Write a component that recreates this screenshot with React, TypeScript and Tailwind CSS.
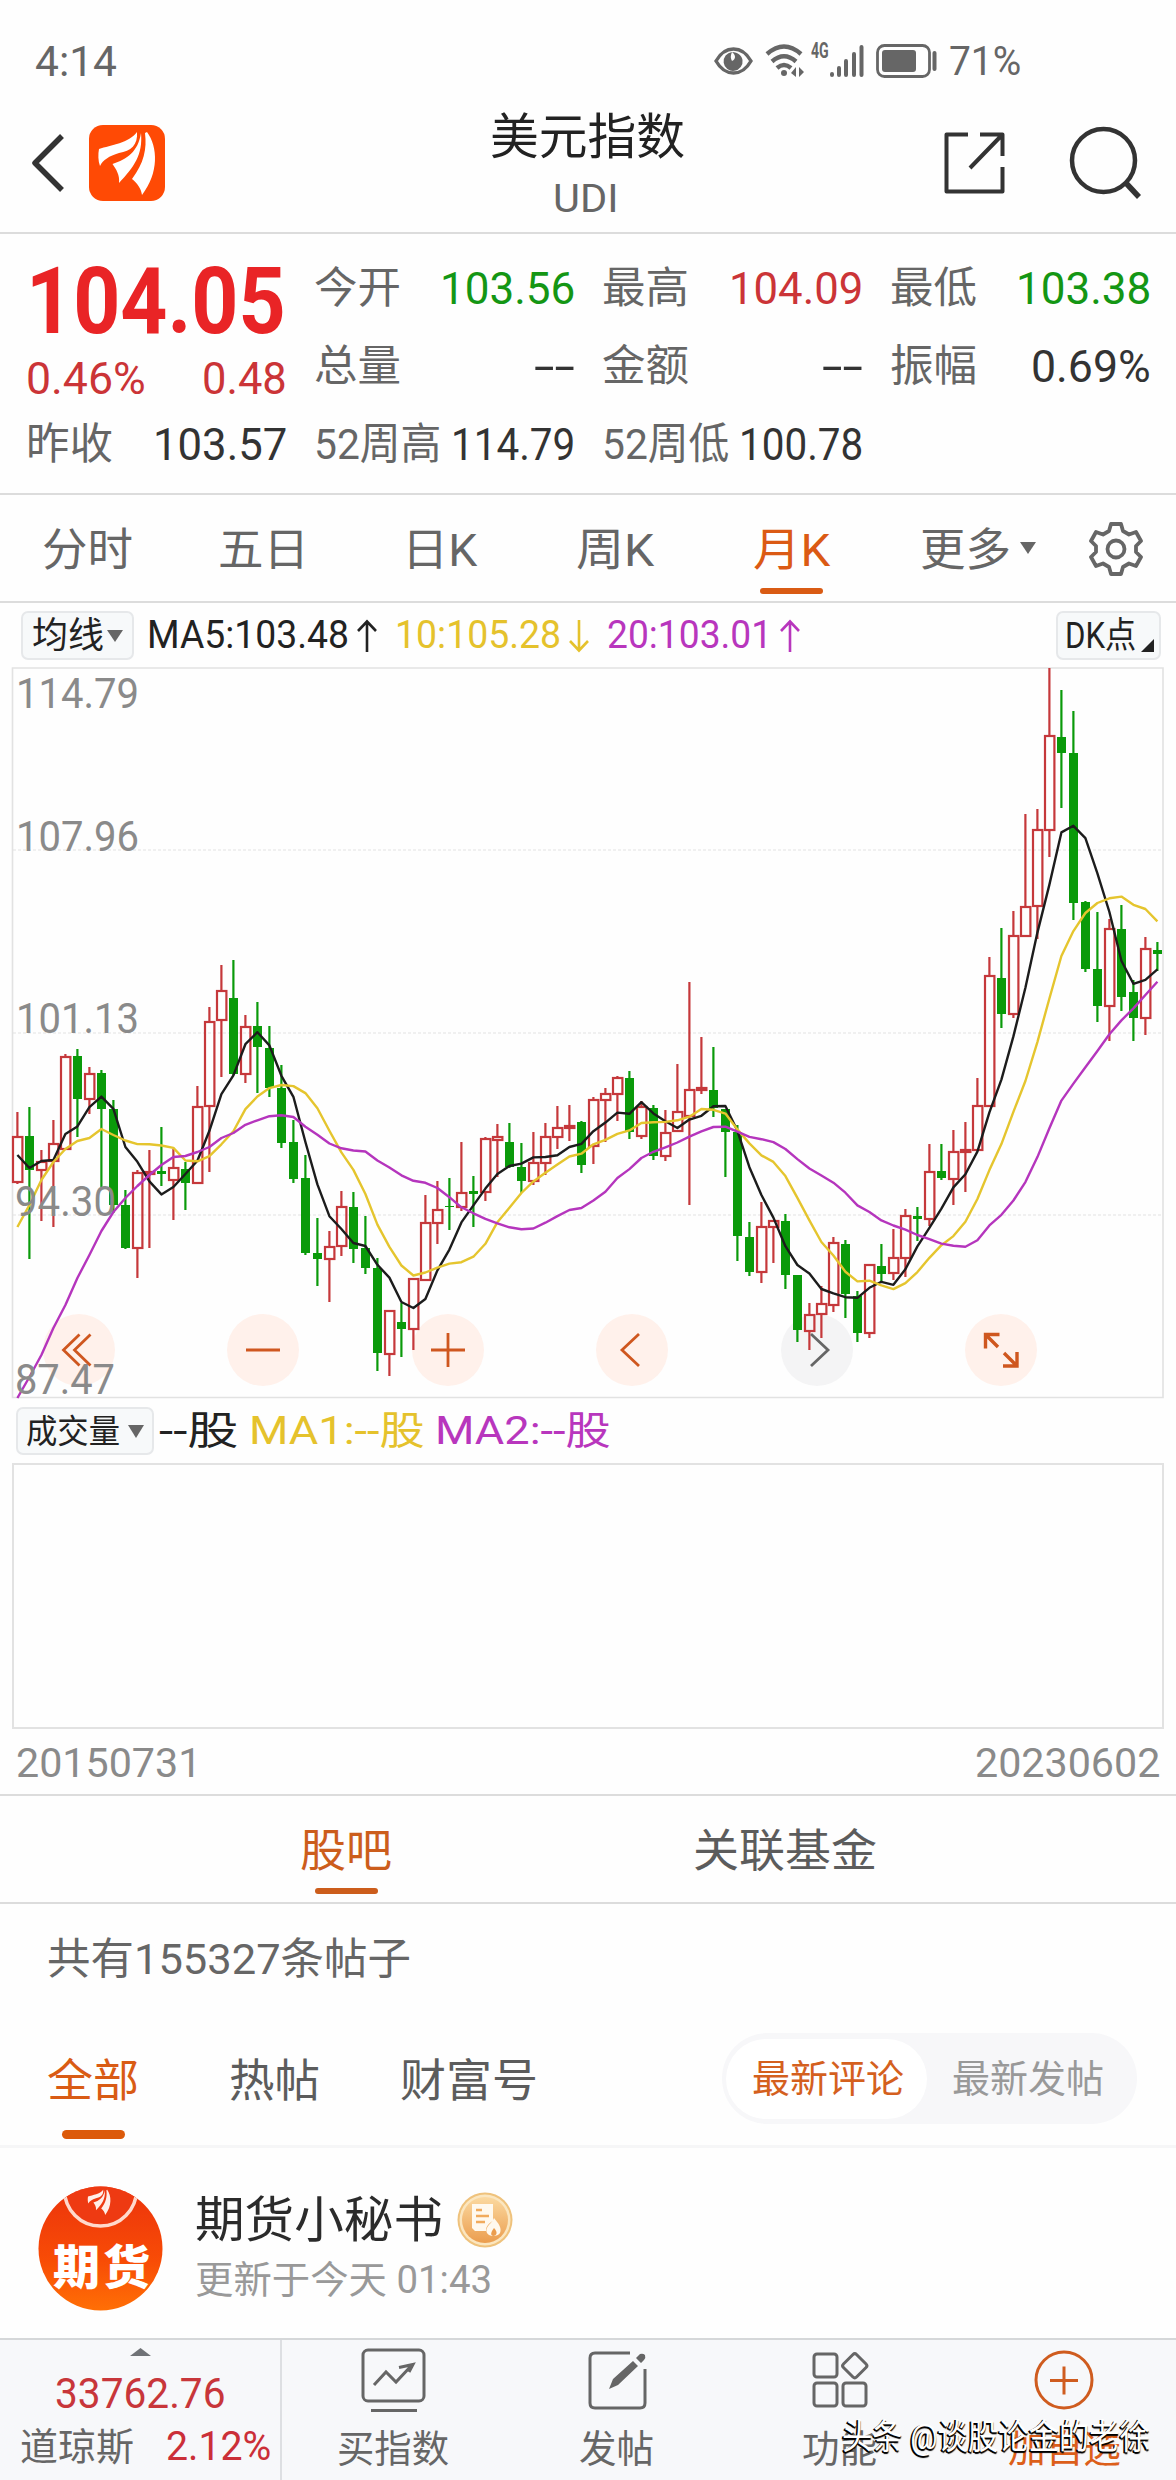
import { useLayoutEffect, useRef, useState, type ReactNode } from "react";

/* Text squeezed or stretched horizontally to an exact column width. */
function Fit({ w, className = "", children }: { w: number; className?: string; children: ReactNode }) {
  const ref = useRef<HTMLSpanElement>(null);
  const [scale, setScale] = useState(1);
  useLayoutEffect(() => {
    if (ref.current) setScale(w / ref.current.offsetWidth);
  }, [w]);
  return (
    <span className={`block shrink-0 whitespace-nowrap leading-none ${className}`} style={{ width: w }}>
      <span ref={ref} className="inline-block origin-left" style={{ transform: `scaleX(${scale})` }}>
        {children}
      </span>
    </span>
  );
}

const RED = "#c5383b";
const GREEN = "#0a9a0a";

/* [direction, high, body top, body bottom, low] in chart pixels; r = rising, g = falling */
type Candle = ["r" | "g", number, number, number, number];
const CANDLES: Candle[] = [
  ["r", 1112, 1137, 1182, 1184], ["g", 1107, 1136, 1170, 1259], ["r", 1150, 1162, 1170, 1221], ["r", 1120, 1144, 1161, 1227],
  ["r", 1054, 1057, 1149, 1150], ["g", 1049, 1056, 1099, 1137], ["r", 1067, 1074, 1099, 1114], ["g", 1070, 1073, 1109, 1187],
  ["g", 1100, 1109, 1205, 1213], ["g", 1190, 1205, 1248, 1249], ["r", 1170, 1173, 1248, 1278], ["r", 1150, 1172, 1174, 1248],
  ["g", 1127, 1171, 1174, 1186], ["r", 1149, 1168, 1180, 1220], ["g", 1162, 1169, 1183, 1210], ["r", 1086, 1107, 1183, 1184],
  ["r", 1007, 1022, 1106, 1172], ["r", 965, 991, 1020, 1077], ["g", 960, 998, 1074, 1075], ["r", 1015, 1027, 1074, 1083],
  ["g", 1002, 1026, 1047, 1093], ["g", 1026, 1048, 1088, 1097], ["g", 1065, 1088, 1143, 1148], ["g", 1120, 1142, 1179, 1183],
  ["g", 1155, 1178, 1253, 1255], ["g", 1218, 1253, 1259, 1286], ["r", 1231, 1247, 1259, 1302], ["r", 1191, 1207, 1246, 1256],
  ["g", 1192, 1207, 1249, 1263], ["g", 1216, 1248, 1268, 1274], ["g", 1258, 1268, 1353, 1371], ["r", 1310, 1311, 1354, 1376],
  ["g", 1303, 1322, 1329, 1357], ["r", 1278, 1279, 1329, 1350], ["r", 1195, 1223, 1280, 1280], ["r", 1181, 1210, 1223, 1244],
  ["g", 1178, 1206, 1207, 1230], ["r", 1142, 1193, 1207, 1211], ["g", 1176, 1191, 1194, 1227], ["r", 1137, 1139, 1192, 1201],
  ["r", 1124, 1137, 1140, 1177], ["g", 1123, 1142, 1167, 1168], ["g", 1143, 1167, 1181, 1193], ["r", 1132, 1163, 1181, 1185],
  ["r", 1123, 1137, 1163, 1175], ["r", 1106, 1128, 1137, 1149], ["r", 1105, 1126, 1128, 1141], ["g", 1121, 1122, 1165, 1173],
  ["r", 1097, 1100, 1146, 1164], ["r", 1088, 1094, 1100, 1142], ["r", 1076, 1078, 1094, 1121], ["g", 1071, 1078, 1132, 1139],
  ["r", 1101, 1107, 1136, 1139], ["g", 1105, 1108, 1156, 1160], ["r", 1110, 1133, 1156, 1161], ["r", 1064, 1112, 1131, 1131],
  ["r", 982, 1090, 1116, 1205], ["r", 1037, 1088, 1090, 1094], ["g", 1047, 1090, 1108, 1117], ["g", 1109, 1109, 1132, 1177],
  ["g", 1125, 1132, 1236, 1261], ["g", 1222, 1237, 1272, 1276], ["r", 1202, 1227, 1272, 1283], ["r", 1220, 1221, 1227, 1263],
  ["g", 1214, 1221, 1275, 1289], ["g", 1275, 1275, 1330, 1342], ["r", 1303, 1315, 1331, 1350], ["r", 1286, 1304, 1314, 1338],
  ["r", 1237, 1243, 1305, 1312], ["g", 1240, 1244, 1294, 1318], ["g", 1291, 1296, 1333, 1342], ["r", 1264, 1265, 1333, 1338],
  ["g", 1244, 1266, 1274, 1281], ["r", 1229, 1258, 1273, 1280], ["r", 1209, 1216, 1258, 1277], ["g", 1207, 1216, 1219, 1241],
  ["r", 1144, 1172, 1219, 1226], ["g", 1144, 1171, 1178, 1180], ["r", 1130, 1152, 1179, 1205], ["r", 1122, 1150, 1152, 1192],
  ["r", 1078, 1106, 1150, 1151], ["r", 957, 976, 1106, 1107], ["g", 928, 978, 1014, 1028], ["r", 911, 936, 1014, 1018],
  ["r", 814, 907, 936, 937], ["r", 809, 830, 906, 939], ["r", 668, 736, 830, 857], ["g", 690, 737, 753, 808],
  ["g", 711, 753, 903, 920], ["g", 901, 902, 969, 972], ["g", 912, 969, 1006, 1022], ["r", 919, 929, 1006, 1041],
  ["g", 905, 929, 997, 1011], ["g", 980, 992, 1018, 1041], ["r", 937, 949, 1018, 1035], ["g", 942, 950, 954, 971],
];

const candleX = (i: number) => 17.4 + 12 * i;
const CLOSES = CANDLES.map((c) => (c[0] === "r" ? c[2] : c[3]));

/* Moving average; `head` carries the values that depend on months before the visible range. */
function average(span: number, head: number[]) {
  return CLOSES.map((_, i) => {
    const y = i < head.length ? head[i] : CLOSES.slice(i - span + 1, i + 1).reduce((a, b) => a + b, 0) / span;
    return `${candleX(i)},${y.toFixed(1)}`;
  }).join(" ");
}
const MA5 = average(5, [1155, 1168, 1161, 1160]);
const MA10 = average(10, [1227, 1205, 1180, 1162, 1149, 1141, 1138, 1129, 1135]);
const MA20 = average(20, [1398, 1377, 1355, 1328, 1305, 1278, 1255, 1231, 1212, 1198, 1186, 1175, 1165, 1157, 1156, 1152, 1147, 1138, 1133]);

const AXIS: [string, number, number, number][] = [
  ["114.79", 16, 708, 123],
  ["107.96", 16, 851, 123],
  ["101.13", 16, 1033, 123],
  ["94.30", 15, 1216, 101],
  ["87.47", 15, 1394, 100],
];

function KLineChart() {
  const circles = [79, 263, 448, 632, 817, 1001];
  return (
    <svg className="block h-[732px] w-full overflow-visible" viewBox="0 667 1176 732">
      {circles.map((x) => (
        <circle key={x} cx={x} cy="1350" r="36" fill={x === 817 ? "#f4f4f5" : "#fff1eb"} />
      ))}
      {[850, 1033, 1215].map((y) => (
        <line key={y} x1="13" x2="1163" y1={y} y2={y} stroke="#ececec" strokeWidth="1.5" strokeDasharray="3 2" />
      ))}
      <path d="M12.5 1397.5V668H1163V1397.5Z" fill="none" stroke="#e2e2e2" strokeWidth="1.6" />
      {CANDLES.map(([dir, high, top, bottom, low], i) => {
        const x = candleX(i);
        if (dir === "g")
          return (
            <g key={i} fill={GREEN}>
              <rect x={x - 1.1} y={high} width="2.2" height={low - high} />
              <rect x={x - 4.4} y={top} width="9" height={bottom - top} />
            </g>
          );
        return (
          <g key={i} fill="none" stroke={RED} strokeWidth="2.2">
            <path d={`M${x} ${high}V${top}M${x} ${bottom}V${low}`} />
            <rect x={x - 4.4} y={top} width="9.4" height={bottom - top} />
          </g>
        );
      })}
      <g fill="none" strokeWidth="2.4" strokeLinejoin="round">
        <polyline points={MA5} stroke="#1c1c1c" />
        <polyline points={MA10} stroke="#e5c52e" />
        <polyline points={MA20} stroke="#b535bd" />
      </g>
      <g fill="#8a8a8a" fontSize="42" fontFamily="Roboto, sans-serif">
        {AXIS.map(([label, x, y, w]) => (
          <text key={label} x={x} y={y} textLength={w} lengthAdjust="spacingAndGlyphs">
            {label}
          </text>
        ))}
      </g>
      <g fill="none" stroke="#cf571f" strokeWidth="2.8">
        <path d="M79.500 1334.500L63.500 1350L79.500 1365.500M90.500 1334.500L74.500 1350L90.500 1365.500" />
        <path d="M246 1350H280" />
        <path d="M431 1350H465M448 1333V1367" />
        <path d="M639 1334L622 1350L639 1366" />
        <path d="M811 1334L828 1350L811 1366" stroke="#666" />
        <path d="M985.500 1348.500V1334.500H999.500M986 1335L998 1347M1003 1366H1017V1352M1016.500 1365.500L1004 1353" strokeWidth="3.400" />
      </g>
    </svg>
  );
}

const Petals = () => (
  <>
    <path d="M10 24C22 20 40 18 48 7C49 20 42 26 30 28C20 31 14 35 11 41C9 36 9 29 10 24Z" />
    <path d="M52 8C54 30 45 42 30 58C31 50 27 44 23.500 39C38 34 49 27 52 8Z" />
    <path d="M58 7C69 22 70 48 53 70C52 63 48 58 43 54C55 38 58 24 56 8Z" />
  </>
);

const Down = ({ className }: { className: string }) => (
  <svg className={className} viewBox="0 0 16 12" preserveAspectRatio="none">
    <path d="M0 0H16L8 12Z" fill="#666" />
  </svg>
);

const Arrow = ({ down = false, className }: { down?: boolean; className: string }) => (
  <svg className={`h-[34px] w-5 shrink-0 ${className}`} viewBox="0 0 20 34" fill="none" stroke="currentColor" strokeWidth="2.6">
    <path d={down ? "M10 1V32M1 22L10 31.500L19 22" : "M10 33V2M1 12L10 2.500L19 12"} />
  </svg>
);

function StatusBar() {
  return (
    <header className="flex h-[106px] items-center pt-4 text-[42px] text-[#666]">
      <Fit w={82} className="ml-[35px] mt-0.5">4:14</Fit>
      <svg className="ml-[597px] h-7 w-[39px]" viewBox="0 0 39 28">
        <path d="M2 14C11 -2 28 -2 37 14C28 30 11 30 2 14Z" fill="none" stroke="#666" strokeWidth="3.400" />
        <path d="M18 5A9.500 9.500 0 1 0 28.500 13C28 9 24 5 18 5C22 8 22 12 18 14C16 10 17 8 18 5Z" fill="#666" />
      </svg>
      <svg className="ml-3 h-[34px] w-10" viewBox="0 0 40 34" fill="none" stroke="#666">
        <path d="M2 10Q19 -5 36 10M7 17.500Q19 7 31 17.500M12 24Q19 18 26 24" strokeWidth="4.400" />
        <circle cx="19" cy="29" r="3" fill="#666" stroke="none" />
        <path d="M31 23V33L26 29ZM34 33V23L39 28Z" fill="#666" stroke="none" />
      </svg>
      <Fit w={18} className="mb-5 ml-[6px] text-[22px] font-bold">4G</Fit>
      <svg className="ml-px h-8 w-[34px]" viewBox="0 0 34 32" fill="none" stroke="#666" strokeWidth="4" strokeLinecap="round">
        <path d="M2 29V30M9 23V30M16 16V30M24 9V30M31.500 2V30" />
      </svg>
      <svg className="ml-3 h-[34px] w-[62px]" viewBox="0 0 62 34">
        <rect x="1.500" y="1.500" width="52" height="31" rx="7" fill="none" stroke="#666" strokeWidth="2.800" />
        <rect x="6" y="6" width="34" height="22" rx="3" fill="#666" />
        <path d="M58.500 9V25" stroke="#666" strokeWidth="4" strokeLinecap="round" />
      </svg>
      <Fit w={72} className="ml-[11px] mt-0.5 text-[40px]">71%</Fit>
    </header>
  );
}

function TitleBar() {
  return (
    <div className="flex h-32 items-start border-b-2 border-[#dcdcdc]">
      <svg className="ml-[30px] mt-7 h-[58px] w-9" viewBox="0 0 36 58" fill="none" stroke="#333" strokeWidth="5.500" strokeLinejoin="round">
        <path d="M32 2L5 29L32 56" />
      </svg>
      <svg className="ml-[23px] mt-[19px] h-[76px] w-[76px]" viewBox="0 0 76 76">
        <rect width="76" height="76" rx="14" fill="#ff4a05" />
        <g fill="#fff"><Petals /></g>
      </svg>
      <div className="ml-[325px] flex w-[195px] flex-col items-center pt-[7px]">
        <Fit w={195} className="text-[49px] text-[#222]">美元指数</Fit>
        <Fit w={66} className="-ml-1 mt-[18px] text-[39px] text-[#666]">UDI</Fit>
      </div>
      <svg className="ml-[257px] mt-[25px] h-[64px] w-[64px]" viewBox="0 0 64 64" fill="none" stroke="#333" strokeWidth="4">
        <path d="M26 3.500H4.500V60.500H60.500V36M38 3.500H60.500V25M60 4L28 37" strokeLinejoin="round" />
      </svg>
      <svg className="ml-[62px] mt-5 h-[76px] w-[76px]" viewBox="0 0 76 76" fill="none" stroke="#333" strokeWidth="4.500">
        <circle cx="35.500" cy="34.500" r="31.500" />
        <path d="M57 56L71 71" strokeWidth="5.500" />
      </svg>
    </div>
  );
}

type CellData = { label: string; lw: number; value: string; vw: number; tone: string };
const QUOTES: CellData[][] = [
  [
    { label: "今开", lw: 87, value: "103.56", vw: 135, tone: "text-[#149614]" },
    { label: "总量", lw: 87, value: "--", vw: 41, tone: "text-[#333]" },
    { label: "52周高", lw: 127, value: "114.79", vw: 124, tone: "text-[#333]" },
  ],
  [
    { label: "最高", lw: 87, value: "104.09", vw: 134, tone: "text-[#cb3437]" },
    { label: "金额", lw: 87, value: "--", vw: 41, tone: "text-[#333]" },
    { label: "52周低", lw: 127, value: "100.78", vw: 124, tone: "text-[#333]" },
  ],
  [
    { label: "最低", lw: 87, value: "103.38", vw: 135, tone: "text-[#149614]" },
    { label: "振幅", lw: 87, value: "0.69%", vw: 120, tone: "text-[#333]" },
  ],
];

const Cell = ({ label, lw, value, vw, tone }: CellData) => (
  <div className="flex h-[78px] items-center justify-between">
    <Fit w={lw} className="text-[43px] text-[#666]">{label}</Fit>
    <Fit w={vw} className={`text-[45px] ${tone}`}>{value}</Fit>
  </div>
);

function Quote() {
  return (
    <section className="flex h-[261px] items-start gap-[27px] border-b-2 border-[#dcdcdc] pl-[26px] pt-[15px]">
      <div className="w-[261px]">
        <div className="flex h-[156px] flex-col">
          <Fit w={260} className="mt-[7px] text-[92px] font-bold text-[#e92426]">104.05</Fit>
          <div className="mt-2 flex justify-between text-[45px] text-[#cb3437]">
            <Fit w={120}>0.46%</Fit>
            <Fit w={85}>0.48</Fit>
          </div>
        </div>
        <Cell label="昨收" lw={87} value="103.57" vw={134} tone="text-[#333]" />
      </div>
      {QUOTES.map((col, i) => (
        <div key={i} className="w-[261px]">
          {col.map((c) => (
            <Cell key={c.label} {...c} />
          ))}
        </div>
      ))}
    </section>
  );
}

function PeriodTabs() {
  const tabs: [string, number][] = [["分时", 91], ["五日", 91], ["日K", 75], ["周K", 78], ["月K", 77]];
  return (
    <nav className="flex h-[108px] items-stretch border-b-2 border-[#dcdcdc] text-[45px] text-[#666]">
      {tabs.map(([t, w]) => (
        <div key={t} className={t === "月K" ? "flex w-44 flex-col items-center text-[#db5a14]" : "flex w-44 flex-col items-center"}>
          <Fit w={w} className="-ml-0.5 mt-[33px]">{t}</Fit>
          {t === "月K" && <div className="-ml-0.5 mt-[15px] h-1.5 w-[63px] rounded-full bg-[#d95b14]" />}
        </div>
      ))}
      <div className="flex w-44 items-start pl-10">
        <Fit w={91} className="mt-[33px]">更多</Fit>
        <Down className="ml-[9px] mt-[47px] h-3 w-4" />
      </div>
      <svg className="ml-[33px] mt-[27px] h-[54px] w-[54px]" viewBox="0 0 54 54" fill="none" stroke="#666" strokeWidth="3.800" strokeLinejoin="round">
        <path d="M22 2H32L34 9L40 12.500L47 10L52 19L47 24V30L52 35L47 44L40 41.500L34 45L32 52H22L20 45L14 41.500L7 44L2 35L7 30V24L2 19L7 10L14 12.500L20 9Z" />
        <circle cx="27" cy="27" r="8.500" />
      </svg>
    </nav>
  );
}

function AverageRow() {
  return (
    <div className="flex h-[64px] items-center pt-px text-[39px]">
      <div className="ml-[21px] flex h-[49px] w-[113px] items-center rounded-[7px] border-2 border-[#e6e8ea] bg-[#f7f9fa] pl-[9px]">
        <Fit w={72} className="text-[36px] text-[#222]">均线</Fit>
        <Down className="ml-[3px] h-3 w-4" />
      </div>
      <Fit w={202} className="ml-[13px] text-[#222]">MA5:103.48</Fit>
      <Arrow className="ml-2 text-[#222]" />
      <Fit w={166} className="ml-[18px] text-[#e5c22c]">10:105.28</Fit>
      <Arrow down className="ml-2 text-[#e5c22c]" />
      <Fit w={165} className="ml-[18px] text-[#b836bd]">20:103.01</Fit>
      <Arrow className="ml-2 text-[#b836bd]" />
      <div className="ml-auto mr-[15px] flex h-[49px] w-[105px] items-center rounded-[7px] border-2 border-[#e6e8ea] bg-[#f7f9fa] pl-[7px]">
        <Fit w={71} className="text-[36px] text-[#222]">DK点</Fit>
        <svg className="ml-[5px] mt-5 h-[13px] w-[13px]" viewBox="0 0 13 13"><path d="M13 0V13H0Z" fill="#222" /></svg>
      </div>
    </div>
  );
}

function Volume() {
  return (
    <section>
      <div className="flex h-[64px] items-center text-[39px]">
        <div className="ml-4 flex h-[48px] w-[138px] items-center rounded-[7px] border-2 border-[#e6e8ea] bg-[#f7f9fa] pl-2">
          <Fit w={94} className="text-[33px] text-[#222]">成交量</Fit>
          <Down className="ml-2 h-[13px] w-4" />
        </div>
        <Fit w={80} className="ml-[5px] text-[#222]">--股</Fit>
        <Fit w={176} className="ml-[10px] text-[#e5c22c]">MA1:--股</Fit>
        <Fit w={176} className="ml-[10px] text-[#b836bd]">MA2:--股</Fit>
      </div>
      <div className="mx-3 h-[266px] border-2 border-[#e2e2e2]" />
      <div className="flex h-[67px] items-center justify-between border-b-2 border-[#dcdcdc] pl-4 pr-4 pt-1 text-[41px] text-[#8a8a8a]">
        <Fit w={185}>20150731</Fit>
        <Fit w={185}>20230602</Fit>
      </div>
    </section>
  );
}

function Community() {
  return (
    <section>
      <div className="flex h-[108px] border-b-2 border-[#dcdcdc] text-[45px] text-[#5c5c5c]">
        <div className="ml-[300px] flex w-[92px] flex-col items-center text-[#cc5d1c]">
          <Fit w={92} className="mt-[33px]">股吧</Fit>
          <div className="mt-[14px] h-1.5 w-[63px] rounded-full bg-[#cc5d1c]" />
        </div>
        <Fit w={184} className="ml-[301px] mt-[33px]">关联基金</Fit>
      </div>
      <Fit w={364} className="ml-[47px] mt-[34px] text-[43px] text-[#666]">共有155327条帖子</Fit>
      <div className="mt-[52px] flex h-[115px] border-b-[3px] border-[#f6f6f7] text-[45px] text-[#5c5c5c]">
        <div className="ml-[47px] flex w-[92px] flex-col items-center pt-[26px] text-[#d95b14]">
          <Fit w={92}>全部</Fit>
          <div className="mt-[26px] h-[9px] w-[63px] rounded-full bg-[#dc5a0a]" />
        </div>
        <Fit w={91} className="ml-[90px] mt-[26px]">热帖</Fit>
        <Fit w={138} className="ml-[80px] mt-[26px]">财富号</Fit>
        <div className="ml-[184px] flex h-[91px] w-[415px] items-center rounded-full bg-[#f7f7f9] pl-1 text-[38px]">
          <div className="flex h-20 w-[201px] items-center rounded-full bg-white pl-[26px] text-[#d4601e]">
            <Fit w={152}>最新评论</Fit>
          </div>
          <Fit w={152} className="ml-[25px] text-[#999]">最新发帖</Fit>
        </div>
      </div>
    </section>
  );
}

function Author() {
  return (
    <section className="flex h-[190px] items-start">
      <svg className="ml-[38px] mt-[38px] h-[125px] w-[125px]" viewBox="0 0 125 125">
        <defs>
          <linearGradient id="avatar" x1="0" y1="0" x2="0" y2="1">
            <stop offset="0" stopColor="#ec330c" />
            <stop offset=".6" stopColor="#f84c06" />
            <stop offset="1" stopColor="#ff6f05" />
          </linearGradient>
          <clipPath id="disc"><circle cx="62.500" cy="62.500" r="62" /></clipPath>
        </defs>
        <circle cx="62.500" cy="62.500" r="62" fill="url(#avatar)" />
        <circle cx="62.500" cy="4" r="36" fill="#ee3a12" stroke="#ffd9cc" strokeWidth="3.500" clipPath="url(#disc)" />
        <g fill="#ffeee8" transform="translate(46 1) scale(.4)"><Petals /></g>
        <text x="15" y="98" textLength="97" fontSize="47" fontWeight="900" fill="#fff" fontFamily="'Noto Sans CJK SC', sans-serif">期货</text>
      </svg>
      <div className="ml-8 pt-[46px]">
        <div className="flex h-[52px] items-center">
          <Fit w={248} className="text-[49px] text-[#2b2b2b]">期货小秘书</Fit>
          <svg className="ml-[14px] h-14 w-14" viewBox="0 0 56 56">
            <defs>
              <linearGradient id="medal" x1="0" y1="0" x2="0" y2="1">
                <stop offset="0" stopColor="#fbd9a0" />
                <stop offset="1" stopColor="#eb9d4e" />
              </linearGradient>
            </defs>
            <circle cx="28" cy="28" r="27.500" fill="#efc27c" />
            <circle cx="28" cy="28" r="25.500" fill="#fbe6bf" />
            <circle cx="28" cy="28" r="23" fill="url(#medal)" />
            <path d="M15 12H36V29C32 31 29 34 29 39H18L15 36Z" fill="#fff9ee" />
            <path d="M19 18H25M19 24H32M19 30H28" stroke="#f1ab5c" strokeWidth="2.500" />
            <path d="M37 26C42 32 45 36 43 41C42 43 39 44 36 44C31 44 28 40 30 36C31 33 35 31 37 26Z" fill="#fff9ee" />
            <path d="M37 36C41 40 40 44 36 44C33 43 34 40 37 36Z" fill="#eb9d4e" />
          </svg>
        </div>
        <Fit w={297} className="mt-[15px] text-[38px] text-[#999]">更新于今天 01:43</Fit>
      </div>
    </section>
  );
}

function BottomBar() {
  return (
    <footer className="relative flex h-[142px] border-t-2 border-[#d5d7d9] bg-[#f7f8fa] text-[38px] text-[#666]">
      <div className="w-[282px] border-r-2 border-[#dddfe2]">
        <svg className="ml-[130px] mt-2 h-2 w-[21px]" viewBox="0 0 21 8"><path d="M0 8L10.500 0L21 8Z" fill="#707377" /></svg>
        <Fit w={171} className="ml-[55px] mt-4 text-[43px] text-[#c8363a]">33762.76</Fit>
        <div className="ml-[20px] mt-3 flex items-center">
          <Fit w={114}>道琼斯</Fit>
          <Fit w={105} className="ml-8 text-[40px] text-[#cb2f38]">2.12%</Fit>
        </div>
      </div>
      <div className="flex flex-1 flex-col items-center">
        <svg className="mt-2 h-[65px] w-[65px]" viewBox="0 0 65 65" fill="none" stroke="#666" strokeWidth="3">
          <rect x="2" y="2" width="61" height="51" rx="5" />
          <path d="M10 62.500H56M13 37L25 24L35 34L51 17M38 19.500L52 16.500L48 24" />
        </svg>
        <Fit w={112} className="-ml-0.5 mt-[17px]">买指数</Fit>
      </div>
      <div className="flex flex-1 flex-col items-center">
        <svg className="mt-2 h-[65px] w-[65px]" viewBox="0 0 65 65" fill="none" stroke="#666" strokeWidth="3">
          <path d="M45 5H10Q5 5 5 10V55Q5 60 10 60H55Q60 60 60 55V21" />
          <path d="M24 41L28 31L48 13L53 18L33 37ZM51 10L55 6Q58 5 60 7Q61 10 59 12L56 15Z" fill="#666" stroke="none" />
        </svg>
        <Fit w={75} className="-ml-0.5 mt-[17px]">发帖</Fit>
      </div>
      <div className="flex flex-1 flex-col items-center">
        <svg className="mt-2 h-[65px] w-[65px]" viewBox="0 0 65 65" fill="none" stroke="#666" strokeWidth="3" strokeLinejoin="round">
          <rect x="6" y="6" width="23" height="23" rx="3" />
          <rect x="6" y="35" width="23" height="23" rx="3" />
          <rect x="35" y="35" width="23" height="23" rx="3" />
          <rect x="37.500" y="8.500" width="18.500" height="18.500" rx="2.500" transform="rotate(45 46.750 17.750)" />
        </svg>
        <Fit w={75} className="-ml-[3px] mt-[17px]">功能</Fit>
      </div>
      <div className="flex flex-1 flex-col items-center text-[#dc5f1a]">
        <svg className="mt-2 h-[65px] w-[65px]" viewBox="0 0 65 65" fill="none" stroke="#cf5c1f" strokeWidth="3">
          <circle cx="32" cy="32" r="28" />
          <path d="M18 32.500H46M32 18.500V46.500" />
        </svg>
        <Fit w={113} className="mt-[17px]">加自选</Fit>
      </div>
      <div className="absolute bottom-[25px] right-[26px] text-[35px] text-white [text-shadow:-2px_1px_0_#000,-1px_1px_0_#000,0_2px_1px_#000]">
        <Fit w={308}>头条 @谈股论金的老徐</Fit>
      </div>
    </footer>
  );
}

export default function App() {
  return (
    <main className="flex h-[2480px] w-[1176px] flex-col overflow-hidden bg-[#fefefe] font-[Roboto,'Noto_Sans_CJK_SC',sans-serif]">
      <StatusBar />
      <TitleBar />
      <Quote />
      <PeriodTabs />
      <AverageRow />
      <KLineChart />
      <Volume />
      <Community />
      <Author />
      <BottomBar />
    </main>
  );
}
